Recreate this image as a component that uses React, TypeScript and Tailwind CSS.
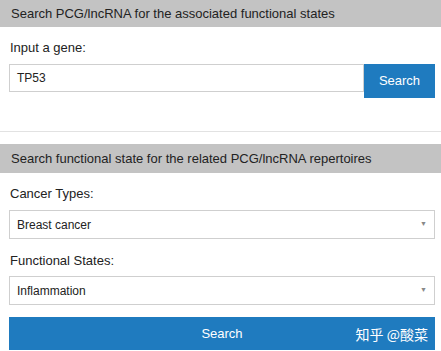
function FakeSelect({ value }: { value: string }) {
  return (
    <div className="flex items-center justify-between h-[29px] border border-[#cfcfcf] bg-white pl-[7px] pr-[7px] text-[12px] text-[#222]">
      <span>{value}</span>
      <span className="text-[#888] text-[7px]">▼</span>
    </div>
  );
}

export default function App() {
  return (
    <div className="w-[441px] h-[351px] bg-white overflow-hidden font-['Liberation_Sans',Arial,sans-serif]">
      <div className="h-[27px] bg-[#c3c3c3] flex items-center pl-[11px] text-[13px] text-[#222]">
        Search PCG/lncRNA for the associated functional states
      </div>

      <div className="pl-[9px] pr-[6px]">
        <div className="mt-[11px] h-[20px] leading-[20px] text-[13px] text-[#222] pl-px">Input a gene:</div>
        <div className="flex items-start mt-[6px]">
          <div className="flex-1 h-[28px] border border-[#cfcfcf] flex items-center pl-[7px] text-[12px] text-[#222]">
            TP53
          </div>
          <button className="w-[71px] h-[34px] bg-[#1f7bbf] text-white text-[13px]">Search</button>
        </div>
      </div>

      <div className="mt-[33px] border-t border-[#e2e2e2]" />

      <div className="mt-[12px] h-[29px] bg-[#c3c3c3] flex items-center pl-[11px] text-[13px] text-[#222]">
        Search functional state for the related PCG/lncRNA repertoires
      </div>

      <div className="pl-[9px] pr-[6px]">
        <div className="mt-[11px] h-[20px] leading-[20px] text-[13px] text-[#222] pl-px">Cancer Types:</div>
        <div className="mt-[6px]">
          <FakeSelect value="Breast cancer" />
        </div>
        <div className="mt-[12px] h-[20px] leading-[20px] text-[13px] text-[#222] pl-px">Functional States:</div>
        <div className="mt-[5px]">
          <FakeSelect value="Inflammation" />
        </div>
        <div className="relative mt-[12px] h-[33px] bg-[#1f7bbf] flex items-center justify-center text-white text-[13px]">
          Search
          <span className="absolute right-[7px] top-1/2 -translate-y-1/2 text-[14px] leading-none font-['Noto_Sans_CJK_SC',sans-serif]">
            知乎 @酸菜
          </span>
        </div>
      </div>
    </div>
  );
}
